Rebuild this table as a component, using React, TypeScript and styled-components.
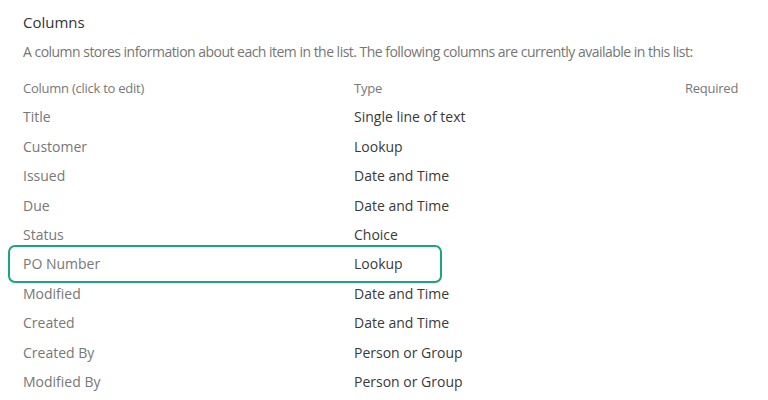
import React from "react";
import styled, { createGlobalStyle } from "styled-components";

const Global = createGlobalStyle`
  html, body { margin: 0; padding: 0; background: #ffffff; }
  body { font-family: "Open Sans", "Noto Sans", sans-serif; }
`;

const Page = styled.div`
  width: 768px;
  height: 400px;
  box-sizing: border-box;
  padding: 12px 0 0 8px;
  overflow: hidden;
  background: #fff;
`;

const Heading = styled.h2`
  margin: 0 0 0 15px;
  font-size: 15px;
  font-weight: 400;
  line-height: 20px;
  color: #333333;
`;

const Description = styled.p`
  margin: 10px 0 0 15px;
  font-size: 14px;
  line-height: 20px;
  color: #767676;
  letter-spacing: -0.52px;
  white-space: nowrap;
`;

const HeaderRow = styled.div`
  display: grid;
  grid-template-columns: 331px 1fr 52px;
  margin: 16px 0 0 15px;
  width: 714px;
  font-size: 13px;
  line-height: 20px;
  color: #787878;
  letter-spacing: -0.25px;
`;

const Rows = styled.div`
  display: flex;
  flex-direction: column;
  margin-top: 4px;
`;

const Row = styled.div<{ $active?: boolean }>`
  display: grid;
  grid-template-columns: 331px 1fr;
  width: 434px;
  box-sizing: border-box;
  height: ${(p) => (p.$active ? "37.44px" : "29.44px")};
  margin: ${(p) => (p.$active ? "-4px 0" : "0")};
  padding-left: 13px;
  align-items: center;
  border: 2px solid ${(p) => (p.$active ? "#1aa583" : "transparent")};
  border-radius: 7px;
  font-size: 14px;
  letter-spacing: 0;
  white-space: nowrap;
`;

const Name = styled.span`
  color: #777777;
`;

const Type = styled.span`
  color: #3a3a3a;
`;

const columns: [string, string][] = [
  ["Title", "Single line of text"],
  ["Customer", "Lookup"],
  ["Issued", "Date and Time"],
  ["Due", "Date and Time"],
  ["Status", "Choice"],
  ["PO Number", "Lookup"],
  ["Modified", "Date and Time"],
  ["Created", "Date and Time"],
  ["Created By", "Person or Group"],
  ["Modified By", "Person or Group"],
];

export default function App() {
  return (
    <Page>
      <Global />
      <Heading>Columns</Heading>
      <Description>
        A column stores information about each item in the list. The following columns are currently available in this list:
      </Description>
      <HeaderRow>
        <span>Column (click to edit)</span>
        <span>Type</span>
        <span>Required</span>
      </HeaderRow>
      <Rows>
        {columns.map(([n, t]) => (
          <Row key={n} $active={n === "PO Number"}>
            <Name>{n}</Name>
            <Type>{t}</Type>
          </Row>
        ))}
      </Rows>
    </Page>
  );
}
